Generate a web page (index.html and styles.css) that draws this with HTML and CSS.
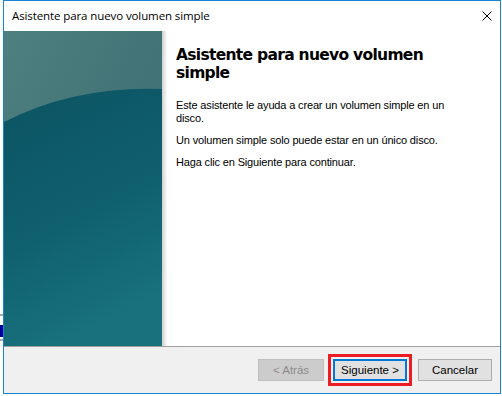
FILE: index.html
```html
<!DOCTYPE html>
<html lang="es">
<head>
  <meta charset="UTF-8" />
  <title>Asistente para nuevo volumen simple</title>
  <link rel="stylesheet" href="styles.css">
</head>
<body>

  <!-- Bits of the desktop behind the dialog -->
  <div class="desk">
    <div class="desk-line"></div>
    <div class="desk-block"></div>
    <div class="desk-line"></div>
  </div>

  <div class="window">
    <div class="titlebar">
      <span class="title">Asistente para nuevo volumen simple</span>
      <svg class="close" width="10" height="10" viewBox="0 0 10 10">
        <path d="M0.5 0.5 L9.5 9.5 M9.5 0.5 L0.5 9.5" stroke="#000" stroke-width="1" fill="none"/>
      </svg>
    </div>

    <div class="main">
      <div class="side">
        <svg width="158" height="315" viewBox="0 0 158 315" preserveAspectRatio="none">
          <defs>
            <linearGradient id="top" x1="0" y1="0" x2="1" y2="1">
              <stop offset="0" stop-color="#4e8080"/>
              <stop offset="1" stop-color="#36686f"/>
            </linearGradient>
            <linearGradient id="low" x1="0" y1="0" x2="0.3" y2="1">
              <stop offset="0" stop-color="#0c5363"/>
              <stop offset="0.55" stop-color="#0f5f6e"/>
              <stop offset="1" stop-color="#18717c"/>
            </linearGradient>
          </defs>
          <rect width="158" height="315" fill="url(#top)"/>
          <path d="M0 91 Q70 55 158 58 L158 315 L0 315 Z" fill="url(#low)"/>
        </svg>
        <div class="side-shadow"></div>
      </div>

      <div class="content">
        <h2>Asistente para nuevo volumen simple</h2>
        <p>Este asistente le ayuda a crear un volumen simple en un disco.</p>
        <p>Un volumen simple solo puede estar en un único disco.</p>
        <p class="gap">Haga clic en Siguiente para continuar.</p>
      </div>
    </div>

    <div class="footer">
      <button class="btn back" disabled>&lt; Atrás</button>
      <div class="highlight">
        <button class="btn next">Siguiente &gt;</button>
      </div>
      <button class="btn cancel">Cancelar</button>
    </div>
  </div>

</body>
</html>
```

FILE: styles.css
```css
/* Basic Reset */
* {
  margin: 0;
  padding: 0;
  box-sizing: border-box;
}

body {
  width: 502px;
  height: 396px;
  background-color: #fff;
  display: flex;
  overflow: hidden;
  font-family: "Liberation Sans", Arial, sans-serif;
}

/* Desktop strip on the left */
.desk {
  width: 3px;
  padding-top: 314px;
}

.desk-line {
  height: 2px;
  background-color: #a8a8a8;
  margin-bottom: 9px;
}

.desk-block {
  height: 12px;
  background-color: #00009a;
  margin-bottom: 2px;
}

/* Dialog window */
.window {
  width: 498px;
  height: 394px;
  border: 1px solid #1883d7;
  display: flex;
  flex-direction: column;
}

.titlebar {
  height: 30px;
  display: flex;
  align-items: center;
  justify-content: space-between;
  padding: 0 8px 1px 8px;
  background-color: #fff;
}

.title {
  font-family: "Open Sans", "Noto Sans", sans-serif;
  font-size: 11.5px;
  color: #000;
  letter-spacing: -0.1px;
}

/* Main area */
.main {
  height: 315px;
  display: flex;
}

.side {
  display: flex;
}

.side svg {
  display: block;
}

.side-shadow {
  width: 5px;
  background: linear-gradient(to right, #cfcfcf, #e6e6e6 50%, #fafafa);
}

.content {
  flex: 1;
  padding: 15px 30px 0 9px;
  background-color: #fff;
  color: #000;
}

.content h2 {
  font-family: "DejaVu Sans", Verdana, sans-serif;
  font-weight: bold;
  font-size: 15.5px;
  line-height: 18px;
  letter-spacing: -0.7px;
  margin-bottom: 17px;
}

.content p {
  font-size: 11px;
  line-height: 13px;
  letter-spacing: -0.15px;
  margin-bottom: 9px;
}

.content p.gap {
  margin-top: 5px;
}

/* Footer with buttons */
.footer {
  flex: 1;
  border-top: 1px solid #a0a0a0;
  background-color: #f0f0f0;
  display: flex;
  align-items: center;
  justify-content: flex-end;
  padding: 0 8px 0 0;
}

.btn {
  height: 22px;
  width: 74px;
  font-family: "Liberation Sans", Arial, sans-serif;
  font-size: 11.5px;
  color: #000;
  background-color: #e1e1e1;
  border: 1px solid #adadad;
}

.btn.back {
  width: 66px;
  background-color: #cccccc;
  border-color: #bfbfbf;
  color: #8c8c8c;
  margin-right: 4px;
}

.highlight {
  border: 3px solid #ed1c24;
  padding: 2px;
  margin-right: 6px;
}

.btn.next {
  display: block;
  border: 2px solid #0078d7;
}
```
